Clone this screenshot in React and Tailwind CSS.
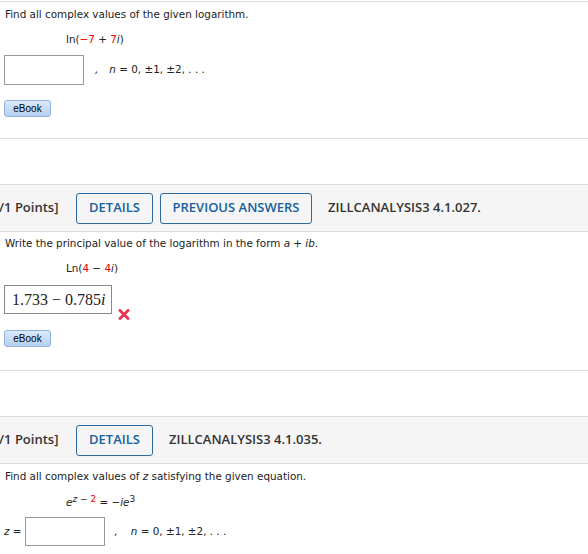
import React from 'react';

const body = { fontFamily: '"DejaVu Sans", Verdana, sans-serif' };
const head = { fontFamily: '"Open Sans", "Noto Sans", sans-serif' };

const EBook = () => (
    <button
        className="block w-[47px] h-[17px] rounded-[3px] border border-[#8fb3dc] bg-gradient-to-b from-[#dbe9fa] to-[#b6d0f0] text-[10px] leading-none text-black"
        style={{ fontFamily: '"Liberation Sans", Arial, sans-serif' }}
    >
        eBook
    </button>
);

const Seq = () => (
    <span className="text-[#222]">
        <i>n</i> = 0, ±1, ±2, . . .
    </span>
);

const Header = ({ buttons, code }) => (
    <div
        className="flex items-center h-[48px] bg-[#f5f5f5] border-y border-[#dcdcdc] text-[13px] font-semibold text-[#333]"
        style={head}
    >
        <span className="-ml-[1px] w-[64px] whitespace-nowrap">/1 Points]</span>
        <div className="flex gap-[7px] ml-[13px]">
            {buttons.map((b) => (
                <button
                    key={b.label}
                    className="h-[31px] rounded-[3px] border border-[#2a6aa0] text-[#17609d]"
                    style={{ width: b.w }}
                >
                    {b.label}
                </button>
            ))}
        </div>
        <span className="ml-[16px]">{code}</span>
    </div>
);

export default function App() {
    return (
        <div className="w-[588px] h-[554px] overflow-hidden bg-white text-[#222] text-[10.4px]" style={body}>
            {/* Pregunta 1 */}
            <div className="mt-px border-t border-[#dcdcdc] h-[137px] pl-[5px] pt-[5px]">
                <p className="leading-[14px]">Find all complex values of the given logarithm.</p>
                <p className="mt-[11px] ml-[61px] leading-[14px]">
                    ln(<span className="text-[#e00]">−7</span> + <span className="text-[#e00]">7</span><i>i</i>)
                </p>
                <div className="flex items-center mt-[9px] -ml-px">
                    <div className="w-[80px] h-[30px] border border-[#999]" />
                    <span className="ml-[11px]"><i>,</i></span>
                    <span className="ml-[11px]"><Seq /></span>
                </div>
                <div className="mt-[15px] -ml-px"><EBook /></div>
            </div>

            <div className="border-t border-[#dcdcdc] h-[46px]" />

            <Header
                buttons={[
                    { label: 'DETAILS', w: 77 },
                    { label: 'PREVIOUS ANSWERS', w: 152 },
                ]}
                code="ZILLCANALYSIS3 4.1.027."
            />

            {/* Pregunta 2 */}
            <div className="h-[138px] pl-[5px] pt-[4px]">
                <p className="leading-[14px]">
                    Write the principal value of the logarithm in the form <i>a</i> + <i>ib</i>.
                </p>
                <p className="mt-[11px] ml-[61px] leading-[14px]">
                    Ln(<span className="text-[#e00]">4</span> − <span className="text-[#e00]">4</span><i>i</i>)
                </p>
                <div className="flex items-start mt-[10px] -ml-px">
                    <div
                        className="w-[108px] h-[29px] border border-[#888] flex items-center pl-[7px] text-[16px] text-[#222] whitespace-nowrap"
                        style={{ fontFamily: '"Liberation Serif", "DejaVu Serif", serif' }}
                    >
                        <span>1.733 − 0.785<i>i</i></span>
                    </div>
                    <svg className="ml-[6px] mt-[24px]" width="12" height="11" viewBox="0 0 12 11">
                        <path d="M2 1.5 L10 9.5 M10 1.5 L2 9.5" stroke="#e8384f" strokeWidth="3" strokeLinecap="round" />
                    </svg>
                </div>
                <div className="mt-[10px] -ml-px"><EBook /></div>
            </div>

            <div className="border-t border-[#dcdcdc] h-[46px]" />

            <Header buttons={[{ label: 'DETAILS', w: 77 }]} code="ZILLCANALYSIS3 4.1.035." />

            {/* Pregunta 3 */}
            <div className="pl-[5px] pt-[5px]">
                <p className="leading-[14px]">
                    Find all complex values of <i>z</i> satisfying the given equation.
                </p>
                <p className="mt-[12px] ml-[61px] leading-[14px]">
                    <i>e</i>
                    <sup className="text-[9px]">
                        <i>z</i> − <span className="text-[#e00]">2</span>
                    </sup>{' '}
                    = −<i>ie</i>
                    <sup className="text-[9px]">3</sup>
                </p>
                <div className="flex items-center mt-[8px] -ml-px">
                    <span><i>z</i> =</span>
                    <div className="ml-[4px] w-[80px] h-[29px] border border-[#999]" />
                    <span className="ml-[9px]"><i>,</i></span>
                    <span className="ml-[13px]"><Seq /></span>
                </div>
            </div>
        </div>
    );
}
